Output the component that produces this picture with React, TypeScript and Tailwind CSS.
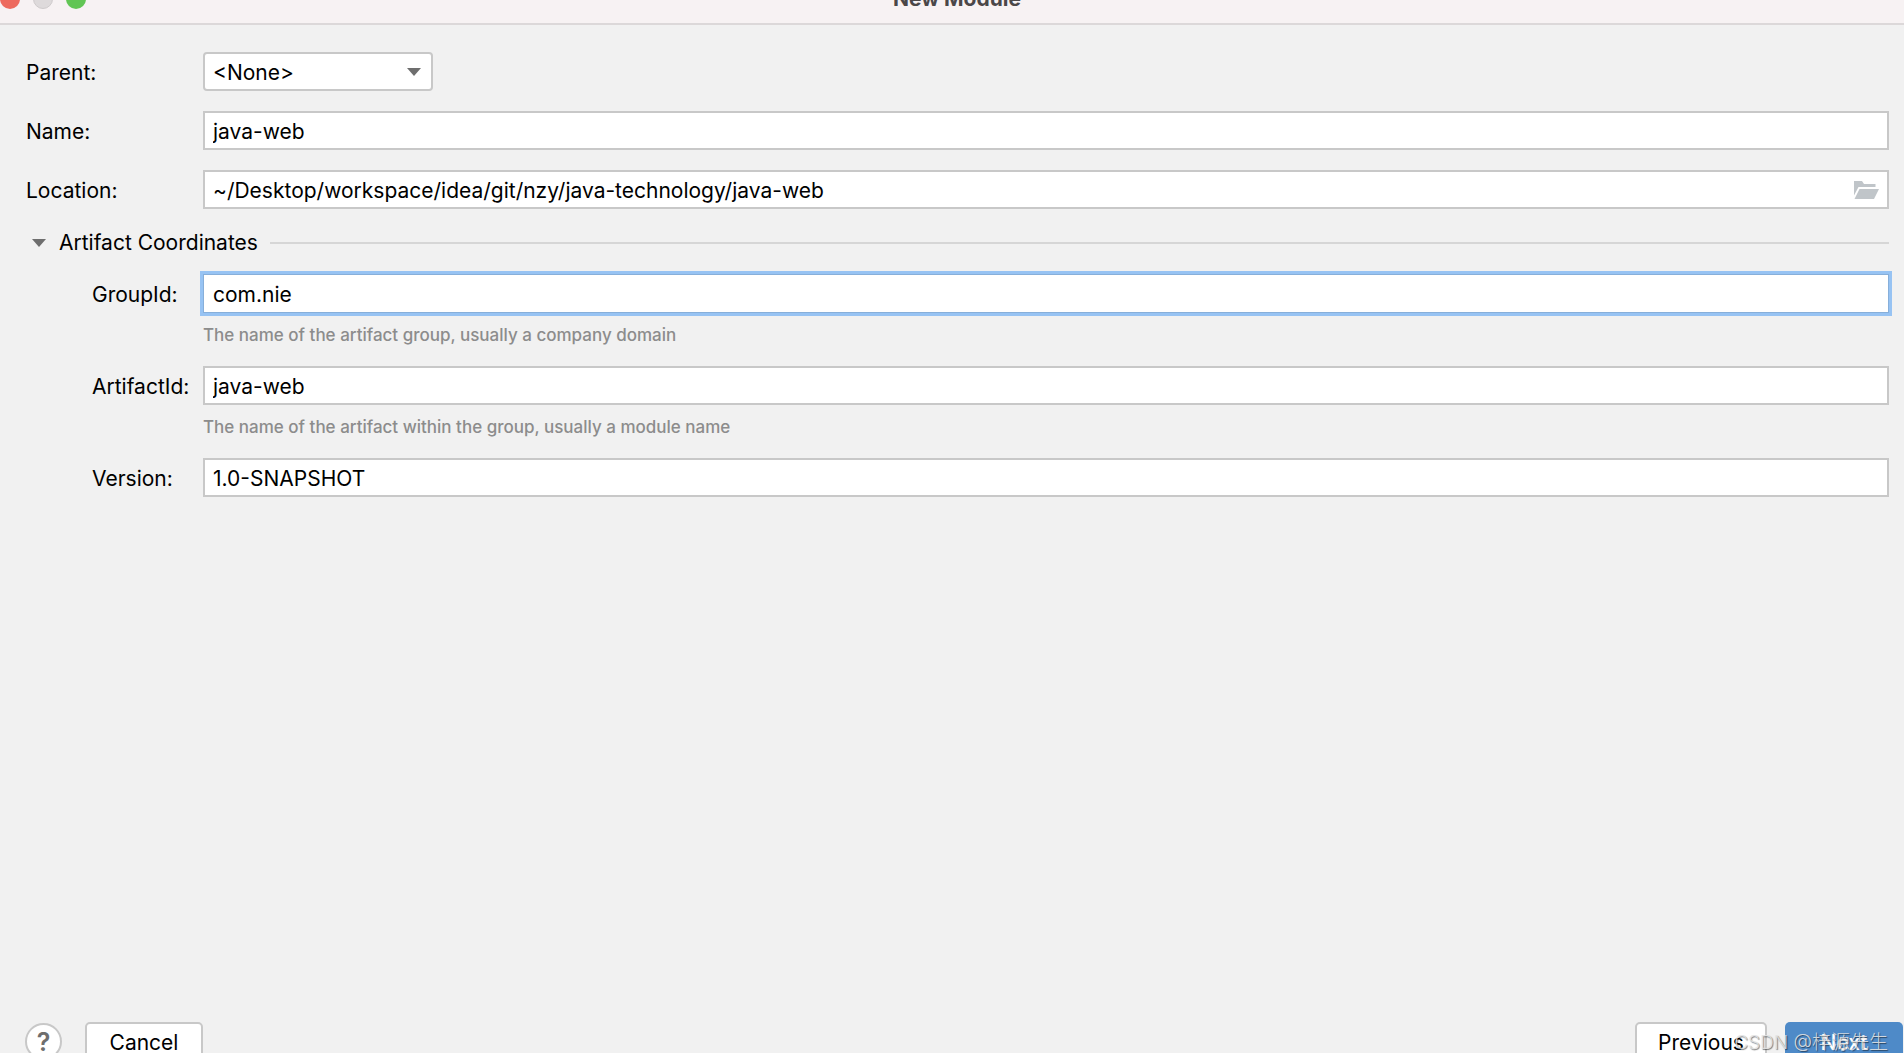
import { useState, type ReactNode } from 'react';

const fieldClass =
  'block h-[39px] w-full border-2 border-[#c8c8c8] bg-white px-2 pt-0.5 text-[21px] leading-6 text-black outline-none';

function Row({ id, label, nested, children }: { id: string; label: string; nested?: boolean; children: ReactNode }) {
  return (
    <div className="flex items-center">
      <label
        htmlFor={id}
        className={nested ? 'w-[203px] shrink-0 pt-0.5 pl-[92px] whitespace-nowrap' : 'w-[203px] shrink-0 pt-0.5 pl-[26px] whitespace-nowrap'}
      >
        {label}
      </label>
      <div className="relative min-w-0 flex-1">{children}</div>
    </div>
  );
}

function Hint({ children }: { children: ReactNode }) {
  return <p className="mt-2.5 mb-[19px] pl-[203px] text-[17px] leading-6 font-medium text-[#8c8c8c]">{children}</p>;
}

function Triangle() {
  return (
    <svg width="14" height="8" viewBox="0 0 14 8" aria-hidden="true">
      <path d="M0 0H14L7 8Z" fill="#6e6e6e" />
    </svg>
  );
}

function FolderIcon() {
  return (
    <svg width="25" height="18" viewBox="0 0 25 18" fill="#c0c5c9" aria-hidden="true">
      <path d="M0 0H8L10 3H21.500V6H4.500L0 14.500Z" />
      <path d="M5.500 8H25L20 18H0.500Z" />
    </svg>
  );
}

export default function App() {
  const [open, setOpen] = useState(true);
  const [name, setName] = useState('java-web');
  const [location, setLocation] = useState('~/Desktop/workspace/idea/git/nzy/java-technology/java-web');
  const [group, setGroup] = useState('com.nie');
  const [artifact, setArtifact] = useState('java-web');
  const [version, setVersion] = useState('1.0-SNAPSHOT');

  return (
    <div className="flex h-screen flex-col bg-white pb-[9px] font-['Inter','Noto_Sans_CJK_SC',sans-serif] text-[21px] leading-6 text-black">
      <header className="flex h-[25px] shrink-0 flex-col justify-end overflow-hidden border-b-2 border-[#dcd8d9] bg-[#f7f2f3] pb-3">
        <div className="grid shrink-0 grid-cols-[1fr_auto_1fr] items-center">
          <div className="flex gap-[13px]">
            <button aria-label="Close" className="size-5 rounded-full bg-[#ed6a5e]" />
            <button aria-label="Minimize" className="size-5 rounded-full border border-[#cfcbcc] bg-[#dedadb]" />
            <button aria-label="Zoom" className="size-5 rounded-full bg-[#61c554]" />
          </div>
          <h1 className="pl-2.5 text-[21px] leading-6 font-bold text-[#4b4748]">New Module</h1>
        </div>
      </header>

      <div className="flex min-h-0 flex-1 flex-col overflow-hidden bg-[#f1f1f1]">
        <main className="flex-1 pt-[27px] pr-[15px]">
          <div className="flex flex-col gap-5">
            <Row id="parent" label="Parent:">
              <div className="relative w-[230px]">
                <select
                  id="parent"
                  className="block h-[39px] w-full appearance-none rounded-[4px] border-2 border-[#c8c8c8] bg-white px-2 pt-0.5 text-[21px] leading-6 outline-none"
                >
                  <option>&lt;None&gt;</option>
                </select>
                <span className="pointer-events-none absolute inset-y-0 right-3 flex items-center">
                  <Triangle />
                </span>
              </div>
            </Row>
            <Row id="name" label="Name:">
              <input id="name" className={fieldClass} value={name} onChange={(e) => setName(e.target.value)} />
            </Row>
            <Row id="location" label="Location:">
              <input id="location" className={fieldClass} value={location} onChange={(e) => setLocation(e.target.value)} />
              <button aria-label="Browse" className="absolute inset-y-0 right-2.5 flex items-center">
                <FolderIcon />
              </button>
            </Row>
          </div>

          <section>
            <div className="mt-[21px] mb-[19px] flex items-center gap-3">
              <button onClick={() => setOpen(!open)} aria-expanded={open} className="flex items-center gap-[13px] pl-8">
                <Triangle />
                <span className="pt-px">Artifact Coordinates</span>
              </button>
              <div className="h-0.5 flex-1 bg-[#d6d6d6]" />
            </div>
            {open && (
              <div>
                <Row id="group" label="GroupId:" nested>
                  <input
                    id="group"
                    className="block h-[39px] w-full border border-[#87afda] bg-white px-[9px] pt-0.5 text-[21px] leading-6 shadow-[0_0_0_3px_#97c3f3] outline-none"
                    value={group}
                    onChange={(e) => setGroup(e.target.value)}
                  />
                </Row>
                <Hint>The name of the artifact group, usually a company domain</Hint>
                <Row id="artifact" label="ArtifactId:" nested>
                  <input id="artifact" className={fieldClass} value={artifact} onChange={(e) => setArtifact(e.target.value)} />
                </Row>
                <Hint>The name of the artifact within the group, usually a module name</Hint>
                <Row id="version" label="Version:" nested>
                  <input id="version" className={fieldClass} value={version} onChange={(e) => setVersion(e.target.value)} />
                </Row>
              </div>
            )}
          </section>
        </main>

        <footer className="relative flex h-[31px] shrink-0 items-start overflow-hidden pl-[25px]">
          <button
            aria-label="Help"
            className="mt-px size-[37px] shrink-0 rounded-full border-2 border-[#c8c8c8] bg-white text-[25px] leading-8 font-semibold text-[#6e6e6e]"
          >
            ?
          </button>
          <button className="ml-[23px] h-[42px] w-[118px] rounded-[5px] border-2 border-[#c8c8c8] bg-white">Cancel</button>
          <button className="ml-auto h-[42px] w-[132px] rounded-[5px] border-2 border-[#c8c8c8] bg-white">Previous</button>
          <button className="mr-px ml-[18px] h-[42px] w-[118px] rounded-[5px] bg-[#4e8ac8] font-medium text-white">Next</button>
          <span className="pointer-events-none absolute right-4 bottom-0 text-[19px] leading-5 font-light whitespace-nowrap text-[#e4e4e4]/90 [text-shadow:1px_1px_1px_#00000080]">
            CSDN @梓源先生
          </span>
        </footer>
      </div>
    </div>
  );
}
